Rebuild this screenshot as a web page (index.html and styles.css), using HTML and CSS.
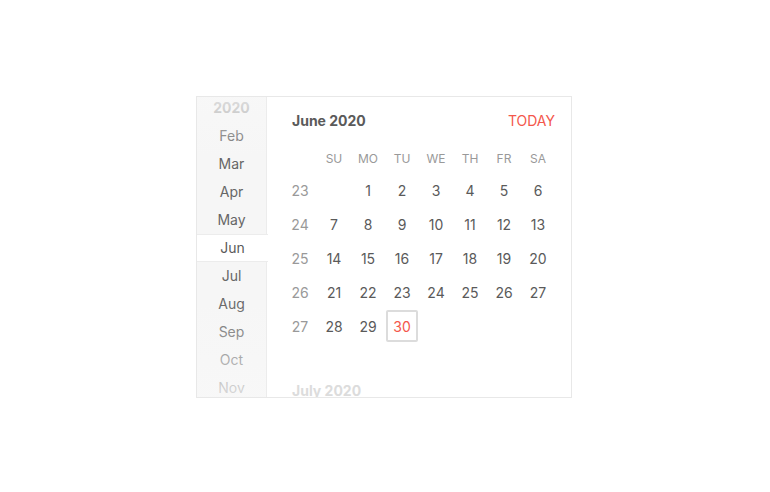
FILE: index.html
```html
<!DOCTYPE html>
<html>
<head>
<meta charset="utf-8">
<link rel="stylesheet" href="styles.css">
</head>
<body>
<div class="picker">
  <div class="months">
    <ul class="month-list">
      <li class="year">2020</li>
      <li>Feb</li>
      <li>Mar</li>
      <li>Apr</li>
      <li>May</li>
      <li class="active">Jun</li>
      <li>Jul</li>
      <li>Aug</li>
      <li>Sep</li>
      <li>Oct</li>
      <li>Nov</li>
    </ul>
  </div>
  <div class="main">
    <section class="month">
      <div class="month-head">
        <span class="month-title">June 2020</span>
        <span class="today">TODAY</span>
      </div>
      <div class="grid">
        <span class="wd"></span><span class="wd">SU</span><span class="wd">MO</span><span class="wd">TU</span><span class="wd">WE</span><span class="wd">TH</span><span class="wd">FR</span><span class="wd">SA</span>

        <span class="wk">23</span><span></span><span class="d">1</span><span class="d">2</span><span class="d">3</span><span class="d">4</span><span class="d">5</span><span class="d">6</span>
        <span class="wk">24</span><span class="d">7</span><span class="d">8</span><span class="d">9</span><span class="d">10</span><span class="d">11</span><span class="d">12</span><span class="d">13</span>
        <span class="wk">25</span><span class="d">14</span><span class="d">15</span><span class="d">16</span><span class="d">17</span><span class="d">18</span><span class="d">19</span><span class="d">20</span>
        <span class="wk">26</span><span class="d">21</span><span class="d">22</span><span class="d">23</span><span class="d">24</span><span class="d">25</span><span class="d">26</span><span class="d">27</span>
        <span class="wk">27</span><span class="d">28</span><span class="d">29</span><span class="d"><span class="cur">30</span></span><span></span><span></span><span></span><span></span>
      </div>
    </section>
    <section class="month next">
      <div class="month-head">
        <span class="month-title">July 2020</span>
      </div>
    </section>
  </div>
</div>
</body>
</html>
```

FILE: styles.css
```css
* { box-sizing: border-box; }
html, body { margin: 0; padding: 0; background: #fff; }
body {
  font-family: Inter, "Noto Sans", "Liberation Sans", sans-serif;
  color: #5a5a5a;
}
.picker {
  margin: 96px 0 0 196px;
  width: 376px;
  height: 302px;
  border: 1px solid #e8e8e8;
  display: flex;
  overflow: hidden;
}
.months {
  position: relative;
  width: 70px;
  flex: none;
  background: #f6f6f6;
  border-right: 1px solid #ececec;
}
.months::before,
.months::after {
  content: "";
  position: absolute;
  left: 0;
  right: 0;
  pointer-events: none;
}
.months::before {
  top: 0;
  height: 62px;
  background: linear-gradient(to bottom, rgba(248,248,248,0.75), rgba(248,248,248,0));
}
.months::after {
  bottom: 0;
  height: 96px;
  background: linear-gradient(to top, rgba(248,248,248,0.8), rgba(248,248,248,0));
}
.month-list {
  list-style: none;
  margin: -3px 0 0 0;
  padding: 0;
}
.month-list li {
  height: 28px;
  line-height: 28px;
  text-align: center;
  font-size: 14px;
  color: #666;
}
.month-list li.year {
  font-weight: 700;
  color: #999;
}
.month-list li.active {
  background: #fff;
  border-top: 1px solid #ececec;
  border-bottom: 1px solid #ececec;
  line-height: 26px;
  margin-right: -2px;
  color: #5a5a5a;
}
.main {
  flex: 1;
  padding: 13px 16px 0 16px;
}
.month-head {
  display: flex;
  justify-content: space-between;
  align-items: center;
  height: 20px;
  padding-left: 9px;
}
.month-title {
  font-size: 14px;
  font-weight: 700;
  color: #5a5a5a;
}
.today {
  font-size: 14px;
  color: #f4574c;
}
.grid {
  display: grid;
  grid-template-columns: repeat(8, 34px);
  grid-template-rows: 30px repeat(5, 34px);
  margin-top: 13px;
}
.grid > span {
  display: flex;
  align-items: center;
  justify-content: center;
  font-size: 14px;
}
.grid .wd {
  font-size: 12px;
  color: #999;
}
.grid .wk { color: #999; }
.grid .d { color: #5a5a5a; }
.cur {
  width: 32px;
  height: 32px;
  border: 2px solid #dcdcdc;
  border-radius: 2px;
  display: flex;
  align-items: center;
  justify-content: center;
  color: #f4574c;
}
.next { margin-top: 37px; }
.next .month-title { color: #dcdcdc; }
```
